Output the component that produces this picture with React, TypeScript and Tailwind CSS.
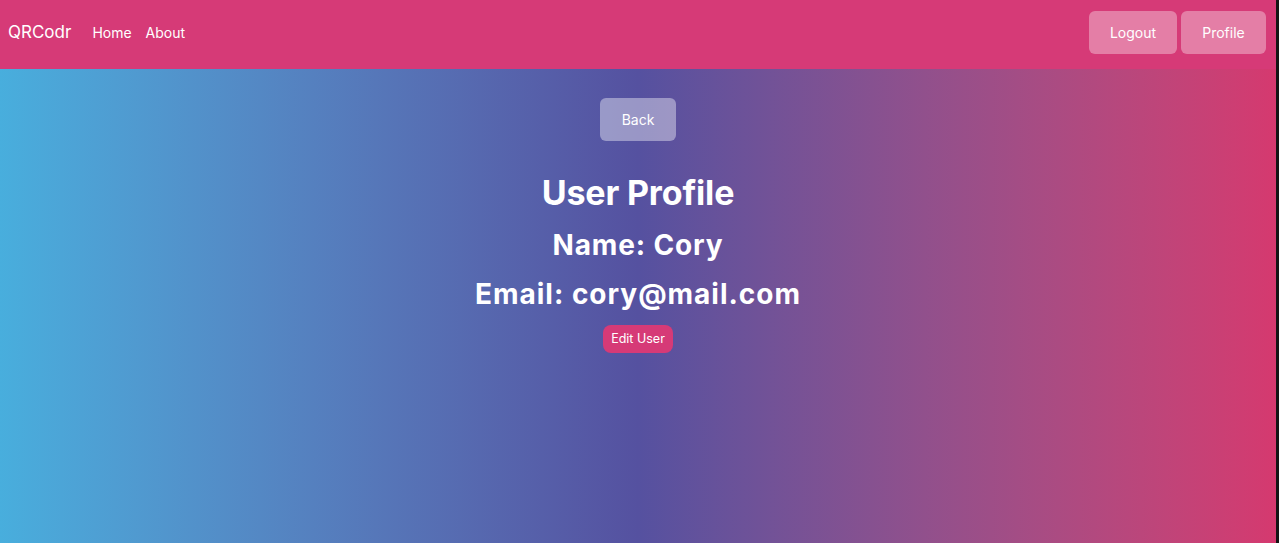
import React from 'react';

const App: React.FC = () => {
  return (
    <div className="flex min-h-[543px] w-full font-['Inter','Noto_Sans',sans-serif] text-white">
      <div className="flex flex-1 flex-col">
        {/* Navbar */}
        <nav className="flex h-[69px] items-start justify-between bg-[#d63a77] pl-2 pr-[10px] pt-[11px]">
          <div className="flex h-[43px] items-center">
            <span className="text-[17px] leading-none">QRCodr</span>
            <div className="ml-[21px] flex gap-[14px] text-[14px]">
              <a href="#">Home</a>
              <a href="#">About</a>
            </div>
          </div>
          <div className="flex gap-1">
            <button className="h-[43px] w-[88px] rounded-md bg-white/35 text-[14px]">Logout</button>
            <button className="h-[43px] w-[85px] rounded-md bg-white/35 text-[14px]">Profile</button>
          </div>
        </nav>

        {/* Content */}
        <main className="flex flex-1 flex-col items-center bg-gradient-to-r from-[#48aedd] via-[#5551a0] to-[#d5396f] pt-[29px]">
          <button className="h-[43px] w-[76px] rounded-md bg-white/40 text-[14px]">Back</button>
          <h1 className="mt-[32px] text-[34px] font-bold leading-[40px] tracking-[-0.005em]">User Profile</h1>
          <h2 className="mt-[14px] text-[28px] font-bold leading-[36px] tracking-[0.03em]">Name: Cory</h2>
          <h2 className="mt-[13px] text-[28px] font-bold leading-[36px] tracking-[0.035em]">Email: cory@mail.com</h2>
          <button className="mt-[13px] h-[28px] w-[70px] rounded-lg bg-[#d63a77] text-[12.5px]">Edit User</button>
        </main>
      </div>
      <div className="w-[3px] bg-[#141414]" />
    </div>
  );
};

export default App;
